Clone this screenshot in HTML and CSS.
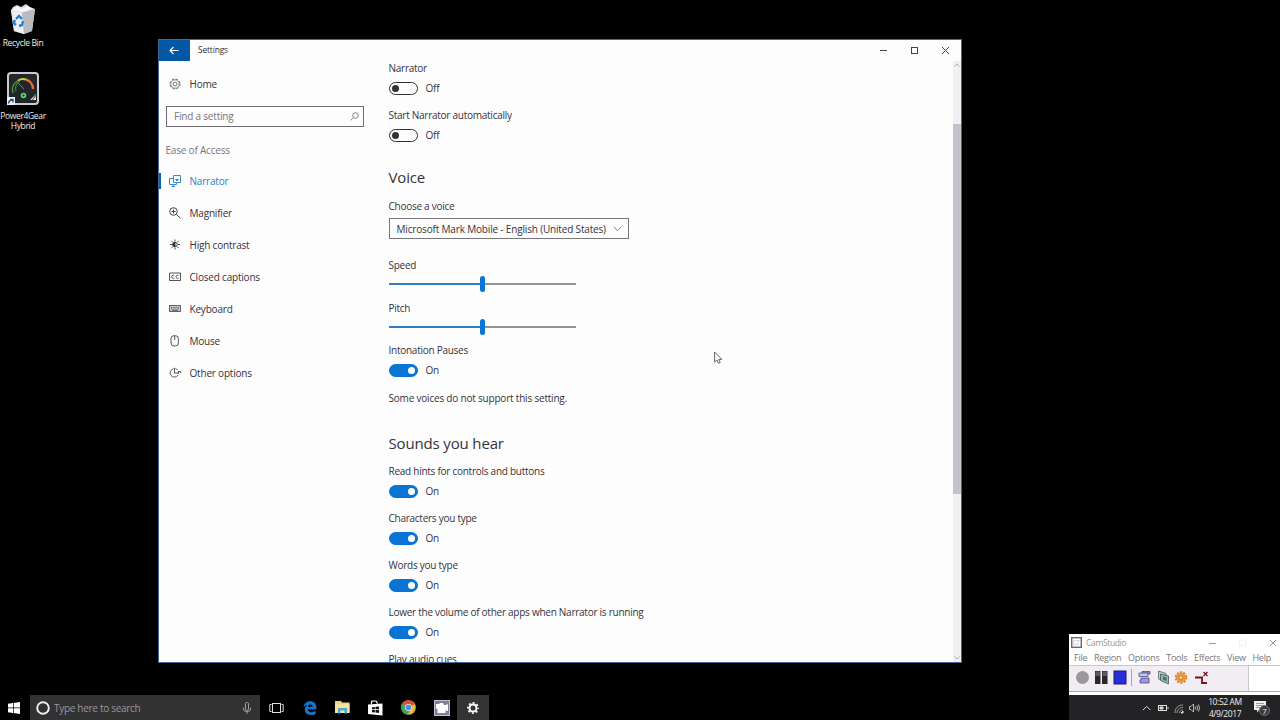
FILE: index.html
```html
<!DOCTYPE html>
<html lang="en">
<head>
    <meta charset="UTF-8">
    <meta name="viewport" content="width=device-width, initial-scale=1.0">
    <title>Settings</title>
    <link rel="stylesheet" href="styles.css">
</head>
<body>

<div class="desktop">

    <!-- Desktop icons -->
    <div class="shortcut recycle">
        <svg width="30" height="32" viewBox="0 0 30 32">
            <path d="M3 6 L5 3 L9 1 L13 3 L18 0 L22 3 L27 5 L24 27 L16 30 L6 27 Z" fill="#d9dbe0"/>
            <path d="M3 6 L14 9 L16 30 L6 27 Z" fill="#eceef2"/>
            <path d="M14 9 L27 5 L24 27 L16 30 Z" fill="#b9bac2"/>
            <path d="M4 6 L9 2 L14 5 L19 2 L25 5 L14 8 Z" fill="#f8f8fa"/>
            <path d="M8 15 L11 12 L14 15 M15 17 L14 21 L11 22 M8 21 L5.500 19 L7 16" fill="none" stroke="#2583cf" stroke-width="2.400"/>
        </svg>
        <span>Recycle Bin</span>
    </div>
    <div class="shortcut power">
        <svg width="34" height="34" viewBox="0 0 34 34">
            <rect x="2" y="1" width="30" height="31" rx="3" fill="#20272a" stroke="#c9ccce" stroke-width="2"/>
            <path d="M7 21 A10 10 0 0 1 12 8.500" fill="none" stroke="#4ea444" stroke-width="1.200"/>
            <path d="M10 19 A8 8 0 0 1 14 9" fill="none" stroke="#3d8a3a" stroke-width="1.200"/>
            <path d="M12 8.500 A9 9 0 0 1 20 7.500" fill="none" stroke="#c8d13c" stroke-width="2"/>
            <path d="M20 7.500 A10 10 0 0 1 27 17" fill="none" stroke="#ed6a31" stroke-width="2.400"/>
            <path d="M12 11 L18 17" stroke="#d9552a" stroke-width="1"/>
            <circle cx="17.500" cy="23.500" r="1.900" fill="none" stroke="#51dc62" stroke-width="1.800"/>
            <path d="M24 28 L30 22 V22.500 L26 28 Z M26.500 28 L30 24 V28 Z" fill="#d9dbdc"/>
            <rect x="1" y="25" width="8" height="8" fill="#f0f3f8"/>
            <path d="M2.500 31.500 Q3 28 6.500 28 M4 27.500 H7 V30.500" fill="none" stroke="#2b4d91" stroke-width="1.400"/>
        </svg>
        <span>Power4Gear<br>Hybrid</span>
    </div>

    <!-- Settings window -->
    <div class="window">
        <div class="titlebar">
            <div class="back">
                <svg width="10" height="9" viewBox="0 0 10 9"><path d="M9.500 4.500 H1 M4.500 1 L1 4.500 L4.500 8" fill="none" stroke="#fff" stroke-width="1.100"/></svg>
            </div>
            <span class="title">Settings</span>
            <svg class="controls" width="70" height="9" viewBox="0 0 70 9" fill="none" stroke="#444" stroke-width="1">
                <path d="M0 4.500 H7"/>
                <rect x="31.500" y="1.500" width="6" height="6"/>
                <path d="M62 1 L69 8 M69 1 L62 8"/>
            </svg>
        </div>

        <div class="window-body">
            <div class="sidebar">
                <div class="nav-item home">
                    <svg width="12" height="12" viewBox="0 0 12 12" fill="none" stroke="#666">
                        <circle cx="6" cy="6" r="5" stroke-width="1" stroke-dasharray="2.400 1.527"/>
                        <circle cx="6" cy="6" r="4.200" stroke-width=".7"/>
                        <circle cx="6" cy="6" r="1.900" stroke-width=".9"/>
                    </svg>
                    <span>Home</span>
                </div>
                <div class="search">
                    <span>Find a setting</span>
                    <svg width="9" height="9" viewBox="0 0 9 9" fill="none" stroke="#777" stroke-width=".9"><circle cx="5.500" cy="3.500" r="2.800"/><path d="M3.500 5.500 L.5 8.500"/></svg>
                </div>
                <div class="group-name">Ease of Access</div>
                <div class="nav-item selected">
                    <svg width="12" height="12" viewBox="0 0 12 12" fill="none" stroke="#2a7fc4" stroke-width=".9">
                        <path d="M4.500 .5 H11.500 V7.500 H4.500 Z M4 3.500 H.5 V9.500 H7.500 V8 M2.500 11.500 H6 M4.200 9.500 V11.500 M6.500 4.500 H9.500 L8 6 Z"/>
                    </svg>
                    <span>Narrator</span>
                </div>
                <div class="nav-item">
                    <svg width="12" height="12" viewBox="0 0 12 12" fill="none" stroke="#444" stroke-width="1">
                        <circle cx="4.500" cy="4.500" r="3.800"/><path d="M7.300 7.300 L11.500 11.300 M2.500 4.500 H6.500 M4.500 2.500 V6.500"/>
                    </svg>
                    <span>Magnifier</span>
                </div>
                <div class="nav-item">
                    <svg width="12" height="12" viewBox="0 0 12 12" fill="none" stroke="#333" stroke-width=".9">
                        <circle cx="6" cy="5.500" r="2.200"/><path d="M6 3.300 A2.200 2.200 0 0 0 6 7.700 Z" fill="#333"/>
                        <path d="M6 .5 V2.500 M6 8.500 V10.500 M1 5.500 H3 M9 5.500 H11 M2.300 1.800 L3.900 3.400 M8.100 7.600 L9.700 9.200 M2.300 9.200 L3.900 7.600 M8.100 3.400 L9.700 1.800"/>
                    </svg>
                    <span>High contrast</span>
                </div>
                <div class="nav-item">
                    <svg width="12" height="12" viewBox="0 0 12 12" fill="none" stroke="#444" stroke-width=".9">
                        <path d="M.5 2 H11.500 V9.500 H.5 Z M5.300 4.600 A1.600 1.600 0 1 0 5.300 7 M9.700 4.600 A1.600 1.600 0 1 0 9.700 7"/>
                    </svg>
                    <span>Closed captions</span>
                </div>
                <div class="nav-item">
                    <svg width="12" height="12" viewBox="0 0 12 12" fill="none" stroke="#555" stroke-width=".9">
                        <rect x=".5" y="2.500" width="11" height="6" fill="#c9c9cb"/>
                        <path d="M2 4.500 H10 M2 6 H10" stroke-dasharray="1 .8"/><path d="M3 7.300 H9"/>
                    </svg>
                    <span>Keyboard</span>
                </div>
                <div class="nav-item">
                    <svg width="12" height="12" viewBox="0 0 12 12" fill="none" stroke="#444" stroke-width=".9">
                        <rect x="2" y=".7" width="7.400" height="10.300" rx="3"/><path d="M5.700 1 V5"/>
                    </svg>
                    <span>Mouse</span>
                </div>
                <div class="nav-item">
                    <svg width="12" height="12" viewBox="0 0 12 12" fill="none" stroke="#444" stroke-width=".9">
                        <path d="M4.500 1.800 A4.200 4.200 0 1 0 9 8 M5.500 .8 V6 H9.500 M6.500 1.500 A4 4 0 0 1 8.500 3 M9.300 7 V4.500 H11.500 V6"/>
                    </svg>
                    <span>Other options</span>
                </div>
            </div>

            <div class="content">
                <div class="setting">
                    <label>Narrator</label>
                    <div class="toggle-row"><i class="toggle"></i>Off</div>
                </div>
                <div class="setting">
                    <label>Start Narrator automatically</label>
                    <div class="toggle-row"><i class="toggle"></i>Off</div>
                </div>

                <h2 class="voice">Voice</h2>
                <label>Choose a voice</label>
                <div class="select">
                    <span>Microsoft Mark Mobile - English (United States)</span>
                    <svg width="9" height="6" viewBox="0 0 9 6"><path d="M.7 .8 L4.500 4.600 L8.300 .8" fill="none" stroke="#777" stroke-width=".9"/></svg>
                </div>
                <div class="slider-setting">
                    <label>Speed</label>
                    <div class="slider"><i class="filled"></i><i class="thumb"></i><i class="rest"></i></div>
                </div>
                <div class="slider-setting">
                    <label>Pitch</label>
                    <div class="slider"><i class="filled"></i><i class="thumb"></i><i class="rest"></i></div>
                </div>
                <div class="setting intonation">
                    <label>Intonation Pauses</label>
                    <div class="toggle-row"><i class="toggle on"></i>On</div>
                </div>
                <p class="note">Some voices do not support this setting.</p>

                <h2 class="sounds">Sounds you hear</h2>
                <div class="setting">
                    <label>Read hints for controls and buttons</label>
                    <div class="toggle-row"><i class="toggle on"></i>On</div>
                </div>
                <div class="setting">
                    <label>Characters you type</label>
                    <div class="toggle-row"><i class="toggle on"></i>On</div>
                </div>
                <div class="setting">
                    <label>Words you type</label>
                    <div class="toggle-row"><i class="toggle on"></i>On</div>
                </div>
                <div class="setting">
                    <label>Lower the volume of other apps when Narrator is running</label>
                    <div class="toggle-row"><i class="toggle on"></i>On</div>
                </div>
                <div class="setting">
                    <label>Play audio cues</label>
                </div>
            </div>

            <div class="scrollbar">
                <svg width="6" height="4" viewBox="0 0 6 4"><path d="M.5 3.500 L3 1 L5.500 3.500" fill="none" stroke="#aaa"/></svg>
                <div class="scroll-thumb"></div>
                <svg class="down" width="6" height="4" viewBox="0 0 6 4"><path d="M.5 .5 L3 3 L5.500 .5" fill="none" stroke="#aaa"/></svg>
            </div>
        </div>
    </div>

    <!-- CamStudio window -->
    <div class="camstudio">
        <div class="cam-title">
            <svg width="11" height="11" viewBox="0 0 11 11"><rect x=".7" y=".7" width="9.600" height="9.600" fill="#fff" stroke="#6a6680" stroke-width="1.400"/><path d="M2.500 3.500 H7 V8 H2.500 Z M7 4 L9 3" fill="#fff" stroke="#c5c2d0" stroke-width=".7"/></svg>
            <span>CamStudio</span>
            <svg class="cam-controls" width="68" height="8" viewBox="0 0 68 8" fill="none"><path d="M0 4.500 H7" stroke="#999"/><rect x="30.500" y="1" width="6" height="6" stroke="#f1eef1"/><path d="M61 1 L67 7 M67 1 L61 7" stroke="#999"/></svg>
        </div>
        <div class="cam-menu">
            <span>File</span><span>Region</span><span>Options</span><span>Tools</span><span>Effects</span><span>View</span><span>Help</span>
        </div>
        <div class="cam-tools">
            <svg width="140" height="20" viewBox="0 0 140 20">
                <circle cx="13.500" cy="9.500" r="6.500" fill="#999"/>
                <path d="M26 3 H31.500 V16 H26 Z M33 3 H38.500 V16 H33 Z" fill="#29262c"/>
                <path d="M26.500 3.500 H31 V8 H26.500 Z M33.500 3.500 H38 V8 H33.500 Z" fill="#5c5960"/>
                <rect x="45" y="3" width="12" height="13" fill="#2a2cd4" stroke="#181885"/>
                <path d="M62.500 1 V18" stroke="#aaa6ae"/>
                <path d="M73 3.500 H81 V6 H73 Z" fill="#8a89c4" stroke="#4d4b86" stroke-width=".8"/>
                <path d="M70 5 H79 V8.500 H70 Z" fill="#c5c4ea" stroke="#4d4b86" stroke-width=".8"/>
                <path d="M72 10 H80 V15 H71 V12 H72 Z" fill="#9a99d4" stroke="#4d4b86" stroke-width=".8"/>
                <path d="M89.500 3 L97 5.500 V13 L89.500 11 Z" fill="#b9d2c9" stroke="#546860" stroke-width=".8"/>
                <path d="M91.500 6 L99.500 8 V16 L91.500 12.500 Z" fill="#8fb6b0" stroke="#44585a" stroke-width=".8"/><path d="M94 8.500 L97.500 9.500 V13 L94 11.800 Z" fill="#44706e"/>
                <circle cx="112" cy="9.500" r="4.700" fill="#ef9138" stroke="#df7926" stroke-width="3" stroke-dasharray="1.800 1.153"/><circle cx="112" cy="9.500" r="4.500" fill="#f09a3e"/><circle cx="112" cy="9.500" r="2" fill="#f9d391" stroke="#c96a1a" stroke-width=".8"/>
                <path d="M126 9.500 H133 V15 H138" fill="none" stroke="#6e1722" stroke-width="1.800"/><path d="M134.500 4 L138.500 8 M138.500 4 L134.500 8" stroke="#6e1722" stroke-width="1.300"/>
            </svg>
            <div class="cam-blank"></div>
        </div>
    </div>

    <!-- Taskbar -->
    <div class="taskbar">
        <div class="start">
            <svg width="12" height="12" viewBox="0 0 12 12" fill="#fff"><path d="M0 1.700 L5 1 V5.600 H0 Z M5.700 .9 L12 0 V5.600 H5.700 Z M0 6.300 H5 V11 L0 10.300 Z M5.700 6.300 H12 V12 L5.700 11.100 Z"/></svg>
        </div>
        <div class="task-search">
            <svg width="14" height="14" viewBox="0 0 14 14"><circle cx="7" cy="7" r="5.800" fill="none" stroke="#f3f3f3" stroke-width="1.900"/></svg>
            <span>Type here to search</span>
            <svg width="8" height="12" viewBox="0 0 8 12" fill="none" stroke="#aaa" stroke-width=".9"><rect x="2.500" y=".6" width="3" height="7.500" rx="1"/><path d="M.6 5.500 V8 Q.6 9.500 4 9.500 Q7.400 9.500 7.400 8 V5.500 M4 9.500 V12"/></svg>
        </div>
        <div class="task-icons">
            <div class="task">
                <svg width="15" height="12" viewBox="0 0 15 12" fill="none" stroke="#ddd"><rect x="3.500" y="1.500" width="8" height="9"/><path d="M2.500 2.500 H.8 V9.500 H2.500 M12.500 2.500 H14.200 V9.500 H12.500"/></svg>
            </div>
            <div class="task">
                <svg width="14" height="14" viewBox="0 0 14 14"><path d="M.5 6.500 C1 2 4 .3 7.200 .3 C11 .3 13.500 3 13.500 6.800 V8.300 H4.800 C5 10.300 6.500 11.200 8.500 11.200 C10.200 11.200 11.600 10.800 12.700 10.100 V12.900 C11.300 13.600 9.700 14 7.700 14 C4 14 1.800 11.800 1.800 8.600 C1.800 6.500 3 4.700 5 3.800 C3 4 1.500 4.900 .5 6.500 Z M5 5.800 H9.600 C9.600 4.300 8.800 3.500 7.400 3.500 C6 3.500 5.200 4.400 5 5.800 Z" fill="#1275ce" fill-rule="evenodd"/></svg>
            </div>
            <div class="task">
                <svg width="15" height="13" viewBox="0 0 15 13"><path d="M0 0 H6 L7 1.500 H14.500 V12 H0 Z" fill="#f3d27c"/><path d="M0 3 H14.500 V12 H0 Z" fill="#fae29a"/><path d="M3 12.500 V7 H12 V12.500 H9.500 V9.500 H5.500 V12.500 Z" fill="#4fa9d5"/></svg>
            </div>
            <div class="task">
                <svg width="15" height="16" viewBox="0 0 15 16"><path d="M0 4.500 L14.500 3.500 V15.500 L0 14 Z" fill="#fff"/><path d="M3.500 4 V2 Q3.500 1 5 1 H7.500 Q9 1 9.300 3.800" fill="none" stroke="#fff" stroke-width="1.200"/><path d="M4 7.200 L6.900 6.900 V9.300 H4 Z M7.500 6.800 L11 6.500 V9.300 H7.500 Z M4 10 H6.900 V12.500 L4 12.200 Z M7.500 10 H11 V12.900 L7.500 12.500 Z" fill="#111"/></svg>
            </div>
            <div class="task">
                <svg width="15" height="15" viewBox="0 0 15 15"><circle cx="7.500" cy="7.500" r="7.300" fill="#e0bd38"/><path d="M7.500 7.500 L1.200 3.800 A7.300 7.300 0 0 1 13.800 4 Z" fill="#dc4a3c"/><path d="M1.200 3.800 A7.300 7.300 0 0 0 6.700 14.800 L9.500 9.500 L7.500 7.500 Z" fill="#43a05a"/><circle cx="7.500" cy="7.500" r="3.400" fill="#eee"/><circle cx="7.500" cy="7.500" r="2.700" fill="#4d86e5"/></svg>
            </div>
            <div class="task">
                <svg width="16" height="16" viewBox="0 0 16 16"><rect x=".5" y=".5" width="15" height="15" fill="#817d9b" stroke="#c1bed0"/><path d="M2 4 H5 L6 3 H9 L10 5 H11.500 L14 4 V11 L11.500 10.500 V13 H3.500 V9 L2 8.500 Z" fill="#fff"/></svg>
            </div>
            <div class="task current">
                <svg width="14" height="14" viewBox="0 0 14 14" fill="none" stroke="#fff"><circle cx="7" cy="7" r="3.500" stroke-width="1.900"/><circle cx="7" cy="7" r="5.100" stroke-width="1.700" stroke-dasharray="1.900 2.105" stroke-dashoffset=".95"/></svg>
            </div>
        </div>
        <div class="tray">
            <svg class="tray-icons" width="60" height="12" viewBox="0 0 60 12" fill="none" stroke="#ddd">
                <path d="M2 8 L5.700 4.300 L9.400 8"/>
                <rect x="17.500" y="3.500" width="8" height="5"/><path d="M19 5 H22 V7 H19 Z M27 5 V7" fill="#ddd"/>
                <path d="M34 11 C34 6 37 3 42 3 M36 11 C36 8 38.500 5.500 42 5.500 M38.500 11 C38.500 9 40 8 42 8" stroke="#aaa" stroke-width=".9"/><path d="M40 11 L42 9 V11 Z" fill="#ddd"/>
                <path d="M48.500 4.500 H50 L52.500 2 V10 L50 7.500 H48.500 Z M54 4.500 Q55 6 54 7.500 M55.800 3.500 Q57.300 6 55.800 8.500 M57.500 2.500 Q59.500 6 57.500 9.500" stroke-width=".8"/>
            </svg>
            <div class="clock">10:52 AM<br>4/9/2017</div>
            <div class="notifications">
                <svg width="13" height="13" viewBox="0 0 13 13"><path d="M0 0 H12 V9 H5 L3 11.500 V9 H0 Z" fill="#eee"/><path d="M2 2.500 H10 M2 4.500 H10 M2 6.500 H7" stroke="#777" stroke-width=".7"/></svg>
                <span class="badge">7</span>
            </div>
        </div>
    </div>

    <svg class="cursor" width="9" height="14" viewBox="0 0 9 14"><path d="M.6 1 V11 L3 9 L4.500 12.300 L6.200 11.500 L4.800 8.400 H7.800 Z" fill="#fff" stroke="#555" stroke-width=".9"/></svg>
</div>

</body>
</html>
```
FILE: styles.css
```css
/* General */
body {
    margin: 0;
    background-color: #000;
    font-family: "Open Sans", "Noto Sans", sans-serif;
    font-size: 10px;
    letter-spacing: -0.2px;
    color: #35333a;
}

svg {
    display: block;
    flex: none;
}

.desktop {
    position: relative;
    width: 1280px;
    height: 720px;
    overflow: hidden;
    background-color: #000;
}

/* Desktop icons */
.shortcut {
    position: absolute;
    left: 0;
    width: 46px;
    display: flex;
    flex-direction: column;
    align-items: center;
    color: #eee;
    font-size: 8.5px;
    line-height: 11px;
    letter-spacing: -0.35px;
    text-align: center;
}

.recycle {
    top: 4px;
    gap: 1px;
}

.power {
    top: 72px;
    gap: 5px;
    line-height: 10px;
}

/* Settings window */
.window {
    position: absolute;
    left: 157.5px;
    top: 38.5px;
    width: 802px;
    height: 622px;
    border: 1px solid #44689c;
    background-color: #fefdfe;
    display: flex;
    flex-direction: column;
}

.titlebar {
    display: flex;
    align-items: center;
    height: 21px;
    flex: none;
}

.back {
    width: 31px;
    height: 21px;
    display: flex;
    align-items: center;
    justify-content: center;
    background-color: #0258a4;
}

.title {
    margin-left: 8.5px;
    font-size: 8.5px;
    line-height: 12px;
    margin-bottom: 1px;
}

.controls {
    margin-left: auto;
    margin-right: 11px;
}

.window-body {
    display: flex;
    flex: 1;
    min-height: 0;
}

/* Left menu */
.sidebar {
    width: 229px;
    flex: none;
    padding-top: 8px;
}

.nav-item {
    height: 32px;
    display: flex;
    align-items: center;
    gap: 9px;
    padding-left: 10px;
}

.home {
    height: 31px;
}

.search {
    box-sizing: border-box;
    width: 198px;
    height: 21px;
    margin: 6px 0 0 7.5px;
    padding: 0 4px 0 7px;
    border: 1px solid #716d73;
    display: flex;
    align-items: center;
    justify-content: space-between;
    color: #77747a;
}

.group-name {
    margin: 15px 0 7px 7px;
    line-height: 16px;
    color: #77747a;
}

.selected {
    color: #2a7fc4;
    background: linear-gradient(#0b62b4, #0b62b4) 0 center / 2px 16px no-repeat;
}

/* Settings content */
.content {
    flex: 1;
    overflow: hidden;
    padding-left: 1px;
    padding-top: 0.5px;
}

label {
    display: block;
    line-height: 14px;
    letter-spacing: -0.26px;
}

.setting {
    margin-bottom: 13px;
}

.toggle-row {
    display: flex;
    align-items: center;
    gap: 8px;
    height: 14px;
    margin-top: 6px;
}

.toggle {
    box-sizing: border-box;
    width: 29px;
    height: 13px;
    padding: 0 2px;
    border: 1.5px solid #333138;
    border-radius: 7px;
    display: flex;
    align-items: center;
}

.toggle::before {
    content: "";
    width: 7px;
    height: 7px;
    border-radius: 50%;
    background-color: #333138;
}

.on {
    justify-content: flex-end;
    border-color: #0a74d4;
    background-color: #0a74d4;
}

.on::before {
    background-color: #fff;
}

h2 {
    font-size: 15px;
    font-weight: 400;
    line-height: 24px;
    letter-spacing: -0.15px;
}

.voice {
    margin: 23px 0 10px;
}

.select {
    box-sizing: border-box;
    width: 240px;
    height: 21px;
    margin: 5px 0 19px;
    padding: 0 6px 0 7px;
    border: 1px solid #77747a;
    display: flex;
    align-items: center;
    justify-content: space-between;
    letter-spacing: -0.17px;
}

.slider-setting {
    margin-bottom: 9px;
}

.slider {
    width: 187px;
    height: 16px;
    margin-top: 4px;
    display: flex;
    align-items: center;
}

.filled,
.rest {
    height: 1.5px;
    flex: 1;
    background-color: #2d7bc0;
}

.rest {
    background-color: #949297;
}

.thumb {
    width: 5px;
    height: 16px;
    border-radius: 2.5px;
    background-color: #0a74d4;
}

.intonation {
    margin-top: -1px;
}

.note {
    margin: 0;
    line-height: 16px;
}

.sounds {
    margin: 25px 0 9px;
}

.scrollbar {
    width: 8px;
    padding: 2px 0;
    display: flex;
    flex-direction: column;
    align-items: center;
    background-color: #f3f0f5;
}

.scroll-thumb {
    width: 8px;
    height: 370px;
    margin-top: 57px;
    background-color: #c6c2ca;
}

.down {
    margin-top: auto;
}

/* CamStudio */
.camstudio {
    position: absolute;
    left: 1069px;
    top: 634px;
    width: 211px;
    height: 61px;
    background-color: #fff;
    font-size: 9px;
    color: #77737a;
}

.cam-title {
    display: flex;
    align-items: center;
    gap: 4px;
    height: 17px;
    padding-left: 2px;
    color: #99959c;
    font-size: 8.5px;
    letter-spacing: -0.35px;
}

.cam-controls {
    margin-left: auto;
    margin-right: 3px;
}

.cam-menu {
    display: flex;
    justify-content: space-between;
    height: 14px;
    line-height: 14px;
    padding: 0 9px 0 5px;
    letter-spacing: -0.25px;
}

.cam-tools {
    display: flex;
    justify-content: space-between;
    height: 25px;
    border-top: 1px solid #c9c6cc;
    border-bottom: 1px solid #aaa7ad;
    background-color: #f1edf3;
}

.cam-tools svg {
    margin-top: 2px;
}

.cam-blank {
    width: 31px;
    border-left: 1px solid #c9c6cc;
    background-color: #fff;
}

/* Taskbar */
.taskbar {
    position: absolute;
    left: 0;
    top: 695px;
    width: 1280px;
    height: 25px;
    display: flex;
}

.start {
    width: 30px;
    display: flex;
    align-items: center;
    padding-left: 8px;
    box-sizing: border-box;
}

.task-search {
    box-sizing: border-box;
    width: 230px;
    padding: 0 9px 0 6px;
    display: flex;
    align-items: center;
    background-color: #333233;
    color: #99979a;
    letter-spacing: -0.3px;
}

.task-search span {
    flex: 1;
    margin-left: 4px;
}

.task-icons {
    display: flex;
}

.task {
    width: 33px;
    display: flex;
    align-items: center;
    justify-content: center;
}

.current {
    background-color: #343335;
    width: 32px;
    margin-left: -1px;
}

.tray {
    box-sizing: border-box;
    width: 211px;
    margin-left: auto;
    padding-right: 13px;
    display: flex;
    align-items: center;
    justify-content: flex-end;
    background-color: #232224;
    color: #eee;
}

.clock {
    width: 46px;
    margin-left: 1px;
    font-size: 8.5px;
    line-height: 12px;
    text-align: center;
    letter-spacing: -0.4px;
}

.notifications {
    position: relative;
    margin-left: 6px;
}

.badge {
    position: absolute;
    left: 5px;
    top: 4px;
    width: 9px;
    height: 9px;
    border-radius: 50%;
    background-color: #3a393b;
    border: 1px solid #777;
    font-size: 8px;
    line-height: 9px;
    text-align: center;
}

/* Mouse pointer */
.cursor {
    position: absolute;
    left: 714px;
    top: 351px;
}
```
